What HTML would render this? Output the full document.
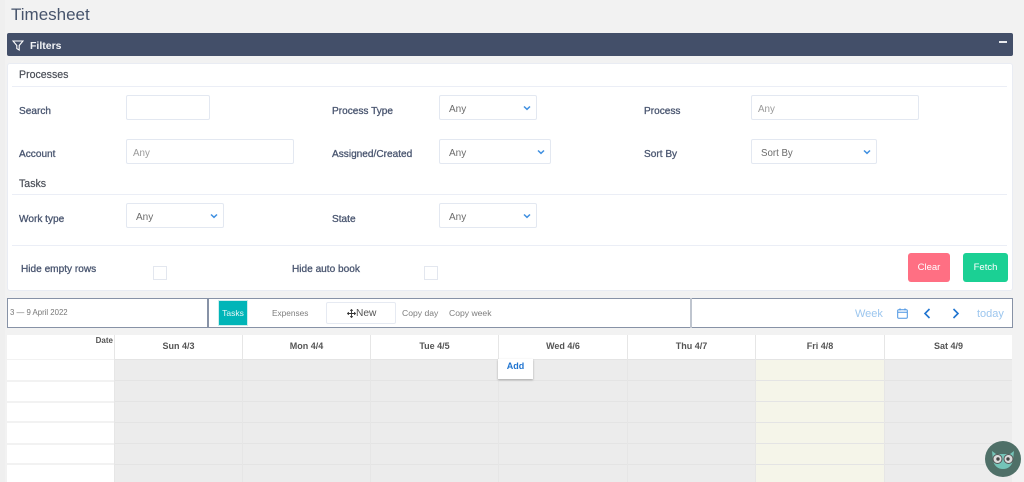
<!DOCTYPE html>
<html><head><meta charset="utf-8"><title>Timesheet</title>
<style>
*{box-sizing:border-box}
html{background:#f2f2f2}
html,body{margin:0;padding:0;width:1024px;height:482px;overflow:hidden;font-family:"Liberation Sans",sans-serif}
body{position:relative;background:#f2f2f2;filter:blur(.3px)}
div{position:absolute}
.t{white-space:nowrap;line-height:14px}
.l{font-size:10.1px;color:#4a5670;font-weight:400;-webkit-text-stroke:.3px #4a5670}
.h{font-size:10.6px;color:#4b4f58;-webkit-text-stroke:.2px #4b4f58}
.i{background:#fff;border:1px solid #e3e8f1;border-radius:2px;height:25px}
.i span{position:absolute;left:6px;top:8px;font-size:9.8px;color:#9a9a9a;line-height:12px}
.s span{left:9px;top:7px;color:#6c6c6c;font-size:10px;line-height:13px}
.s svg{position:absolute;top:9px}
.ln{height:1px;background:#ebeef6;left:12px;width:995px}
.cb{width:14px;height:14px;background:#fff;border:1px solid #e3e7ef}
.th{top:335px;height:24px;background:#fff;font-size:9px;font-weight:700;color:#555;text-align:center;line-height:22px}
.cell{background:#ececec}
.tb{font-size:8.6px;color:#7d7d7d;line-height:12px;white-space:nowrap}
.hr{height:1px;background:#e4e4e4;left:114px;width:898px}
.hw{height:2px;background:#f2f2f2;left:7px;width:107px}
.v{width:1px;top:335px;height:147px;background:#e6e6e6}
</style></head><body>
<div style="left:0;top:0;width:5px;height:482px;background:#efefef"></div>
<div class="t" style="left:11px;top:5px;font-size:17px;line-height:20px;color:#47546c;letter-spacing:0">Timesheet</div>

<div style="left:7px;top:33px;width:1006px;height:23px;background:#434f69;border-radius:2px"></div>
<svg style="position:absolute;left:12px;top:40px" width="12" height="11" viewBox="0 0 12 11"><path d="M1 1h10L7.2 5.5V10L4.8 8.6V5.5Z" fill="none" stroke="#fff" stroke-width="1.1"/></svg>
<div class="t" style="left:30px;top:39px;font-size:10.5px;font-weight:700;color:#f1f3f6">Filters</div>
<div style="left:999px;top:41px;width:8px;height:2px;background:#e8eaee"></div>

<div style="left:7px;top:63px;width:1006px;height:228px;background:#fff;border:1px solid #e9ecf3;border-radius:3px"></div>
<div class="t h" style="left:19px;top:68px">Processes</div>
<div class="ln" style="top:86px"></div>

<div class="t l" style="left:19px;top:103.5px;padding-top:1px">Search</div>
<div class="i" style="left:126px;top:95px;width:84px"></div>
<div class="t l" style="left:332px;top:103.5px;padding-top:1px">Process Type</div>
<div class="i s" style="left:439px;top:95px;width:98px"><span>Any</span><svg style="left:83px" width="8" height="6" viewBox="0 0 8 6"><path d="M1 1.5L4 4.3 7 1.5" fill="none" stroke="#3f8fe0" stroke-width="1.5"/></svg></div>
<div class="t l" style="left:644px;top:103.5px;padding-top:1px">Process</div>
<div class="i" style="left:751px;top:95px;width:168px"><span>Any</span></div>

<div class="t l" style="left:19px;top:148px">Account</div>
<div class="i" style="left:126px;top:139px;width:168px"><span>Any</span></div>
<div class="t l" style="left:332px;top:148px">Assigned/Created</div>
<div class="i s" style="left:439px;top:139px;width:112px"><span>Any</span><svg style="left:97px" width="8" height="6" viewBox="0 0 8 6"><path d="M1 1.5L4 4.3 7 1.5" fill="none" stroke="#3f8fe0" stroke-width="1.5"/></svg></div>
<div class="t l" style="left:644px;top:148px">Sort By</div>
<div class="i s" style="left:751px;top:139px;width:126px"><span style="font-size:9.7px">Sort By</span><svg style="left:111px" width="8" height="6" viewBox="0 0 8 6"><path d="M1 1.5L4 4.3 7 1.5" fill="none" stroke="#3f8fe0" stroke-width="1.5"/></svg></div>

<div class="t h" style="left:19px;top:177px">Tasks</div>
<div class="ln" style="top:194px"></div>

<div class="t l" style="left:19px;top:212px;padding-top:1px">Work type</div>
<div class="i s" style="left:126px;top:203px;width:98px"><span>Any</span><svg style="left:83px" width="8" height="6" viewBox="0 0 8 6"><path d="M1 1.5L4 4.3 7 1.5" fill="none" stroke="#3f8fe0" stroke-width="1.5"/></svg></div>
<div class="t l" style="left:332px;top:212px;padding-top:1px">State</div>
<div class="i s" style="left:439px;top:203px;width:98px"><span>Any</span><svg style="left:83px" width="8" height="6" viewBox="0 0 8 6"><path d="M1 1.5L4 4.3 7 1.5" fill="none" stroke="#3f8fe0" stroke-width="1.5"/></svg></div>
<div class="ln" style="top:245px"></div>

<div class="t l" style="left:21px;top:262.5px">Hide empty rows</div>
<div class="cb" style="left:153px;top:266px"></div>
<div class="t l" style="left:292px;top:262.5px">Hide auto book</div>
<div class="cb" style="left:424px;top:266px"></div>
<div style="left:908px;top:253px;width:42px;height:29px;background:#ff6f83;border-radius:3px;color:#fff;font-size:9.5px;text-align:center;line-height:30px">Clear</div>
<div style="left:963px;top:253px;width:45px;height:29px;background:#1bd094;border-radius:3px;color:#fff;font-size:9.5px;text-align:center;line-height:30px">Fetch</div>

<div style="left:7px;top:298px;width:1006px;height:30px;background:#fff;border:1px solid #8792a6"></div>
<div style="left:207px;top:298px;width:2px;height:30px;background:#8792a6"></div>
<div style="left:690px;top:298px;width:2px;height:30px;background:#bfc5cf"></div>
<div class="tb" style="left:10px;top:307px;font-size:7.8px;color:#777">3 — 9 April 2022</div>
<div style="left:218px;top:300px;width:30px;height:26px;background:#00b5b8;border:1px solid #cdeeee;color:#e8f7f7;font-size:8.5px;text-align:center;line-height:24px">Tasks</div>
<div class="tb" style="left:272px;top:307px;font-size:8.3px">Expenses</div>
<div style="left:326px;top:302px;width:70px;height:22px;background:#fff;border:1px solid #e6eaf2;border-radius:2px"></div>
<svg style="position:absolute;left:347px;top:309px" width="9" height="9" viewBox="0 0 10 10"><path d="M5 .5v9M.5 5h9M3.6 2L5 .6 6.4 2M3.6 8L5 9.4 6.4 8M2 3.6L.6 5 2 6.4M8 3.6L9.4 5 8 6.4" fill="none" stroke="#333" stroke-width="1"/></svg>
<div class="tb" style="left:356px;top:308px;font-size:10.2px;color:#555">New</div>
<div class="tb" style="left:402px;top:307px">Copy day</div>
<div class="tb" style="left:449px;top:307px">Copy week</div>
<div class="tb" style="left:855px;top:307px;font-size:11px;line-height:14px;color:#9cc6ee">Week</div>
<svg style="position:absolute;left:897px;top:308px" width="11" height="11" viewBox="0 0 11 11"><rect x=".7" y="1.7" width="9.6" height="8.6" rx="1" fill="none" stroke="#4a94e2" stroke-width="1"/><path d="M.7 4.2h9.6M3 .4v2M8 .4v2" stroke="#4a94e2" stroke-width="1"/></svg>
<svg style="position:absolute;left:923px;top:308px" width="8" height="11" viewBox="0 0 8 11"><path d="M6.5 1L2 5.5 6.5 10" fill="none" stroke="#1f74d0" stroke-width="1.6"/></svg>
<svg style="position:absolute;left:952px;top:308px" width="8" height="11" viewBox="0 0 8 11"><path d="M1.5 1L6 5.5 1.5 10" fill="none" stroke="#1f74d0" stroke-width="1.6"/></svg>
<div class="tb" style="left:977px;top:307px;font-size:11px;line-height:14px;color:#9cc6ee">today</div>

<div style="left:7px;top:335px;width:1005px;height:147px;background:#fff"></div>
<div class="cell" style="left:114px;top:359px;width:898px;height:123px"></div>
<div style="left:756px;top:359px;width:128px;height:123px;background:#f5f5e9"></div>
<div class="th" style="left:7px;width:107px;text-align:right;padding-right:1px;line-height:12px;font-size:8px">Date</div>
<div class="th" style="left:115px;width:127px">Sun 4/3</div>
<div class="th" style="left:243px;width:127px">Mon 4/4</div>
<div class="th" style="left:371px;width:127px">Tue 4/5</div>
<div class="th" style="left:499px;width:128px">Wed 4/6</div>
<div class="th" style="left:628px;width:127px">Thu 4/7</div>
<div class="th" style="left:756px;width:128px">Fri 4/8</div>
<div class="th" style="left:885px;width:127px">Sat 4/9</div>
<div class="hr" style="top:359px"></div>
<div class="hr" style="top:380px"></div><div class="hr" style="top:401px"></div><div class="hr" style="top:422px"></div><div class="hr" style="top:443px"></div><div class="hr" style="top:464px"></div>
<div class="hw" style="top:359px;height:1px"></div><div class="hw" style="top:380px"></div><div class="hw" style="top:401px"></div><div class="hw" style="top:421px"></div><div class="hw" style="top:443px"></div><div class="hw" style="top:463px"></div>
<div class="v" style="left:114px"></div><div class="v" style="left:242px"></div><div class="v" style="left:370px"></div><div class="v" style="left:498px"></div><div class="v" style="left:627px"></div><div class="v" style="left:755px"></div><div class="v" style="left:884px"></div>

<div style="left:498px;top:359px;width:35px;height:20px;background:#fff;box-shadow:0 1px 2px rgba(0,0,0,.3);color:#1f74d0;font-size:9px;font-weight:700;text-align:center;line-height:15px">Add</div>

<svg style="position:absolute;left:985px;top:441px" width="36" height="36" viewBox="0 0 36 36"><circle cx="18" cy="18" r="18" fill="#4f7068"/><path d="M7 10l4 3h14l4-3-1 9c-1 6-5 9-10 9s-9-3-10-9Z" fill="#74c4b8"/><circle cx="12.5" cy="18" r="4.5" fill="#dcdcdc" stroke="#555" stroke-width="1"/><circle cx="23.5" cy="18" r="4.5" fill="#dcdcdc" stroke="#555" stroke-width="1"/><circle cx="13" cy="18" r="1.7" fill="#444"/><circle cx="23" cy="18" r="1.7" fill="#444"/></svg>
</body></html>
